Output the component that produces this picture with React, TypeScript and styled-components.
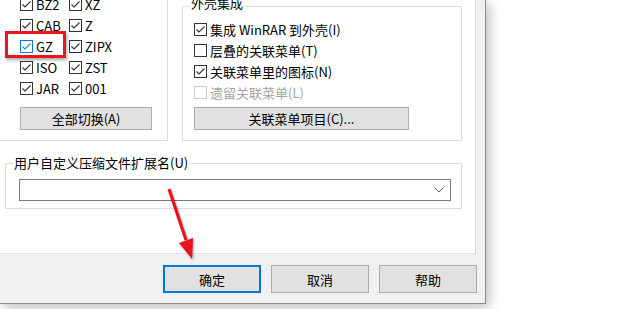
import styled, { createGlobalStyle } from "styled-components";

const GlobalStyle = createGlobalStyle`
  html, body {
    margin: 0;
    padding: 0;
    background: #ffffff;
  }
  body {
    font-family: "Noto Sans CJK SC", "Noto Sans", sans-serif;
    font-size: 13px;
    color: #000000;
  }
`;

const Page = styled.div`
  position: relative;
  width: 620px;
  height: 309px;
  overflow: hidden;
  background: #ffffff;
`;

const Dialog = styled.div`
  display: flex;
  flex-direction: column;
  box-sizing: border-box;
  width: 486px;
  height: 304px;
  background: #f0f0f0;
  border-right: 1px solid #8e8e8e;
  border-bottom: 1px solid #8e8e8e;
  box-shadow: 3px 3px 12px rgba(0, 0, 0, 0.28);
`;

const Panel = styled.div`
  box-sizing: border-box;
  width: 476px;
  height: 254px;
  padding: 0 13px 0 5px;
  background: #ffffff;
  border-right: 1px solid #dadada;
  border-bottom: 1px solid #e3e3e3;
`;

const TopRow = styled.div`
  display: flex;
  gap: 14px;
  height: 153px;
  margin: -12px 0 0 -20px;
`;

const GroupBox = styled.div<{ $pad: string; $width?: number }>`
  position: relative;
  box-sizing: border-box;
  ${(p) => (p.$width ? `width: ${p.$width}px;` : "")}
  padding: ${(p) => p.$pad};
  border: 1px solid #dcdcdc;
  display: flex;
  flex-direction: column;
  align-items: flex-start;
`;

const RightGroup = styled(GroupBox)`
  margin-top: 18px;
`;

const LowerGroup = styled(GroupBox)`
  margin-top: 22px;
`;

const Caption = styled.span<{ $top?: number }>`
  position: absolute;
  top: ${(p) => p.$top ?? -9}px;
  left: 7px;
  padding: 0 1px;
  line-height: 16px;
  background: #ffffff;
  white-space: nowrap;
`;

const FormatGrid = styled.div`
  display: grid;
  grid-template-columns: 49px 49px;
  grid-auto-rows: 21px;
`;

const OptionList = styled.div`
  display: flex;
  flex-direction: column;
`;

const CheckRow = styled.label<{ $disabled?: boolean }>`
  display: flex;
  align-items: center;
  gap: 3px;
  height: 21px;
  white-space: nowrap;
  color: ${(p) => (p.$disabled ? "#a3a3a3" : "#000000")};
`;

const Box = styled.span<{ $tone: "normal" | "hot" | "disabled" }>`
  display: inline-flex;
  align-items: center;
  justify-content: center;
  box-sizing: border-box;
  width: 13px;
  height: 13px;
  background: #ffffff;
  border: 1px solid
    ${(p) =>
      p.$tone === "hot" ? "#0078d7" : p.$tone === "disabled" ? "#cccccc" : "#333333"};
`;

const PushButton = styled.button<{ $width: number; $height?: number; $default?: boolean }>`
  box-sizing: border-box;
  width: ${(p) => p.$width}px;
  height: ${(p) => p.$height ?? 23}px;
  padding: 0;
  font: inherit;
  color: #000000;
  background: #e1e1e1;
  border: 1px solid ${(p) => (p.$default ? "#0078d7" : "#adadad")};
  box-shadow: ${(p) => (p.$default ? "inset 0 0 0 1px #0078d7" : "none")};
  border-radius: 0;
`;

const GroupButton = styled(PushButton)`
  margin-top: 8px;
`;

const ShellButton = styled(PushButton)`
  margin-top: 4px;
`;

const Combo = styled.div`
  box-sizing: border-box;
  display: flex;
  align-items: center;
  justify-content: flex-end;
  width: 432px;
  height: 22px;
  padding-right: 6px;
  background: #ffffff;
  border: 1px solid #7a7a7a;
`;

const ButtonRow = styled.div`
  display: flex;
  justify-content: flex-end;
  gap: 10px;
  padding: 11px 8px 10px 0;
`;

const Highlight = styled.div`
  position: absolute;
  left: 5px;
  top: 31px;
  width: 61px;
  height: 27px;
  box-sizing: border-box;
  border: 3px solid #e8171b;
  box-shadow: 1px 2px 3px rgba(0, 0, 0, 0.35);
`;

const Arrow = styled.svg`
  position: absolute;
  left: 0;
  top: 0;
  filter: drop-shadow(1px 1px 1px rgba(0, 0, 0, 0.4));
`;

type Tone = "normal" | "hot" | "disabled";

const Check = ({ checked, tone = "normal" }: { checked: boolean; tone?: Tone }) => (
  <Box $tone={tone}>
    {checked && (
      <svg width="11" height="11" viewBox="0 0 11 11">
        <path
          d="M1.5 5.5 L4 8 L9.5 2.5"
          fill="none"
          stroke={tone === "hot" ? "#2a7fd4" : "#333333"}
          strokeWidth="1.1"
        />
      </svg>
    )}
  </Box>
);

const formats = ["BZ2", "XZ", "CAB", "Z", "GZ", "ZIPX", "ISO", "ZST", "JAR", "001"];

const shellOptions = [
  { label: "集成 WinRAR 到外壳(I)", checked: true },
  { label: "层叠的关联菜单(T)", checked: false },
  { label: "关联菜单里的图标(N)", checked: true },
  { label: "遗留关联菜单(L)", checked: false, disabled: true },
];

export default function App() {
  return (
    <>
      <GlobalStyle />
      <Page>
        <Dialog>
          <Panel>
            <TopRow>
              <GroupBox $width={183} $pad="5px 0 0 34px">
                <FormatGrid>
                  {formats.map((f) => (
                    <CheckRow key={f}>
                      <Check checked tone={f === "GZ" ? "hot" : "normal"} />
                      {f}
                    </CheckRow>
                  ))}
                </FormatGrid>
                <GroupButton $width={132}>全部切换(A)</GroupButton>
              </GroupBox>

              <RightGroup $width={280} $pad="12px 0 0 11px">
                <Caption $top={-12}>外壳集成</Caption>
                <OptionList>
                  {shellOptions.map((o) => (
                    <CheckRow key={o.label} $disabled={o.disabled}>
                      <Check checked={o.checked} tone={o.disabled ? "disabled" : "normal"} />
                      {o.label}
                    </CheckRow>
                  ))}
                </OptionList>
                <ShellButton $width={215}>关联菜单项目(C)...</ShellButton>
              </RightGroup>
            </TopRow>

            <LowerGroup $pad="15px 10px 7px 13px">
              <Caption>用户自定义压缩文件扩展名(U)</Caption>
              <Combo>
                <svg width="10" height="6" viewBox="0 0 10 6">
                  <path d="M0.5 0.5 L5 5 L9.5 0.5" fill="none" stroke="#606060" strokeWidth="1" />
                </svg>
              </Combo>
            </LowerGroup>
          </Panel>

          <ButtonRow>
            <PushButton $width={98} $height={28} $default>
              确定
            </PushButton>
            <PushButton $width={98} $height={28}>
              取消
            </PushButton>
            <PushButton $width={98} $height={28}>
              帮助
            </PushButton>
          </ButtonRow>
        </Dialog>

        <Highlight />
        <Arrow width="620" height="309" viewBox="0 0 620 309">
          <line x1="169" y1="189" x2="186" y2="240" stroke="#e8141b" strokeWidth="3" />
          <polygon points="192,259 179,243 193,238" fill="#e8141b" />
        </Arrow>
      </Page>
    </>
  );
}
